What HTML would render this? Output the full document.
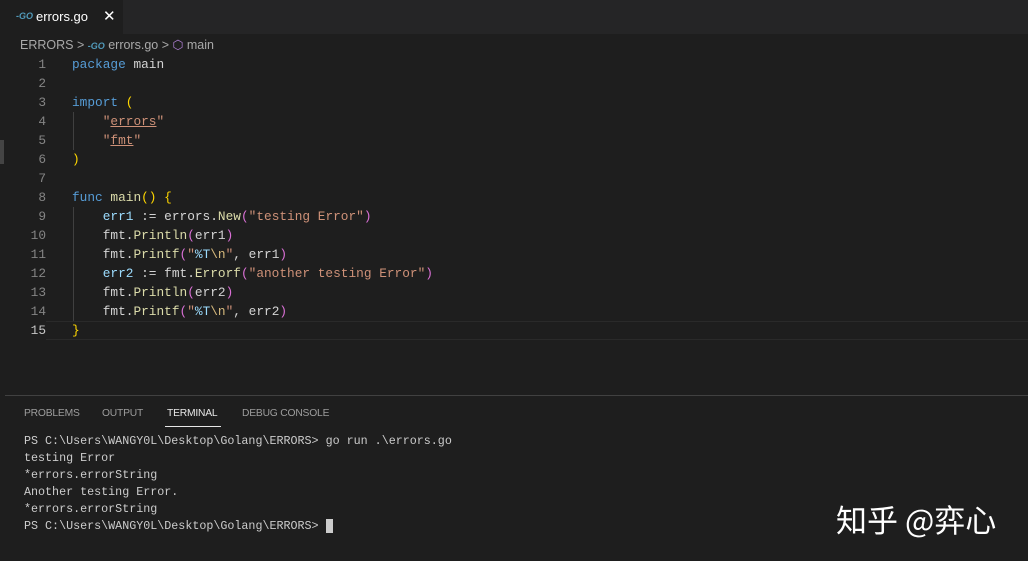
<!DOCTYPE html>
<html><head><meta charset="utf-8"><style>
*{margin:0;padding:0;box-sizing:border-box}
body{width:1028px;height:561px;background:#1e1e1e;position:relative;overflow:hidden;font-family:"Liberation Sans",sans-serif}
.tabbar{position:absolute;left:0;top:0;width:1028px;height:34px;background:#252526}
.tab{position:absolute;left:0;top:0;width:123px;height:34px;background:#1e1e1e;color:#fff;font-size:13px}
.go{color:#519aba;font-weight:bold;font-style:italic;font-size:9px}
.crumb{position:absolute;left:20px;top:37px;color:#a9a9a9;font-size:12.5px}
.code{position:absolute;top:55px;left:0;font-family:"Liberation Mono",monospace;font-size:12.8px;line-height:19px;white-space:pre}
.ln{position:absolute;left:0;width:46px;text-align:right;color:#858585}
.c{position:absolute;left:72px;color:#d4d4d4}
.k{color:#569cd6}.f{color:#dcdcaa}.s{color:#ce9178}.v{color:#9cdcfe}.p{color:#ffd700}.pp{color:#da70d6}.e{color:#d7ba7d}
.guide{position:absolute;left:73px;width:1px;background:#404040}
.cur{position:absolute;left:46px;top:321px;width:982px;height:19px;border-top:1px solid #2a2a2a;border-bottom:1px solid #2a2a2a}
.panel{position:absolute;left:5px;top:395px;width:1023px;height:166px;border-top:1px solid #414141;background:#1e1e1e}
.ptab{position:absolute;top:12px;font-size:10.3px;color:#9d9d9d;letter-spacing:-0.2px}
.term{position:absolute;left:24px;top:433px;font-family:"Liberation Mono",monospace;font-size:11.7px;line-height:17px;color:#ccc;white-space:pre}
.wm{position:absolute;left:836px;top:496px;color:#fff;font-size:31px;font-family:"Noto Sans CJK SC",sans-serif}
</style></head><body>
<div class="tabbar"><div class="tab"><span class="go" style="position:absolute;left:16px;top:11px">-GO</span><span style="position:absolute;left:36px;top:9px">errors.go</span><span style="position:absolute;left:103px;top:7px;font-size:15px">✕</span></div></div>
<div class="crumb">ERRORS &gt; <span class="go">-GO</span> errors.go &gt; <span style="color:#b180d7">⬡</span> main</div>
<div style="position:absolute;left:0;top:140px;width:4px;height:24px;background:#444"></div>
<div class="cur"></div>
<div class="guide" style="top:112px;height:38px"></div>
<div class="guide" style="top:207px;height:114px"></div>
<div class="code">
<div class="ln" style="top:0">1</div><div class="c" style="top:0"><span class="k">package</span> main</div>
<div class="ln" style="top:19px">2</div>
<div class="ln" style="top:38px">3</div><div class="c" style="top:38px"><span class="k">import</span> <span class="p">(</span></div>
<div class="ln" style="top:57px">4</div><div class="c" style="top:57px">    <span class="s">"<u>errors</u>"</span></div>
<div class="ln" style="top:76px">5</div><div class="c" style="top:76px">    <span class="s">"<u>fmt</u>"</span></div>
<div class="ln" style="top:95px">6</div><div class="c" style="top:95px"><span class="p">)</span></div>
<div class="ln" style="top:114px">7</div>
<div class="ln" style="top:133px">8</div><div class="c" style="top:133px"><span class="k">func</span> <span class="f">main</span><span class="p">()</span> <span class="p">{</span></div>
<div class="ln" style="top:152px">9</div><div class="c" style="top:152px">    <span class="v">err1</span> := errors.<span class="f">New</span><span class="pp">(</span><span class="s">"testing Error"</span><span class="pp">)</span></div>
<div class="ln" style="top:171px">10</div><div class="c" style="top:171px">    fmt.<span class="f">Println</span><span class="pp">(</span>err1<span class="pp">)</span></div>
<div class="ln" style="top:190px">11</div><div class="c" style="top:190px">    fmt.<span class="f">Printf</span><span class="pp">(</span><span class="s">"<span class="v">%T</span><span class="e">\n</span>"</span>, err1<span class="pp">)</span></div>
<div class="ln" style="top:209px">12</div><div class="c" style="top:209px">    <span class="v">err2</span> := fmt.<span class="f">Errorf</span><span class="pp">(</span><span class="s">"another testing Error"</span><span class="pp">)</span></div>
<div class="ln" style="top:228px">13</div><div class="c" style="top:228px">    fmt.<span class="f">Println</span><span class="pp">(</span>err2<span class="pp">)</span></div>
<div class="ln" style="top:247px">14</div><div class="c" style="top:247px">    fmt.<span class="f">Printf</span><span class="pp">(</span><span class="s">"<span class="v">%T</span><span class="e">\n</span>"</span>, err2<span class="pp">)</span></div>
<div class="ln" style="top:266px;color:#c6c6c6">15</div><div class="c" style="top:266px"><span class="p">}</span></div>
</div>
<div class="panel">
<span class="ptab" style="left:19px">PROBLEMS</span>
<span class="ptab" style="left:97px">OUTPUT</span>
<span class="ptab" style="left:162px;color:#e7e7e7">TERMINAL</span>
<div style="position:absolute;left:160px;top:30px;width:56px;height:1px;background:#e7e7e7"></div>
<span class="ptab" style="left:237px">DEBUG CONSOLE</span>
</div>
<div class="term">PS C:\Users\WANGY0L\Desktop\Golang\ERRORS&gt; go run .\errors.go
testing Error
*errors.errorString
Another testing Error.
*errors.errorString
PS C:\Users\WANGY0L\Desktop\Golang\ERRORS&gt; <span style="background:#ccc">&nbsp;</span></div>
<div class="wm">知乎 @弈心</div>
</body></html>
